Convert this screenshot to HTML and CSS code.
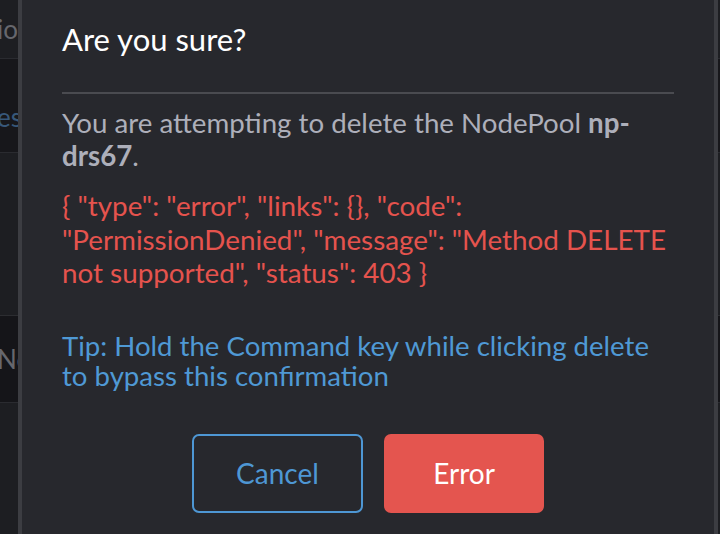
FILE: index.html
```html
<!DOCTYPE html>
<html lang="en">
<head>
<meta charset="utf-8">
<title>Are you sure?</title>
<link rel="stylesheet" href="styles.css">
</head>
<body>
  <div class="page">
    <div class="row row-a"><span class="cell cell-gray">io</span></div>
    <div class="row row-b"><span class="cell cell-blue">es</span></div>
    <div class="row row-c"></div>
    <div class="row row-d"><span class="cell cell-gray">No</span></div>
    <div class="row row-e"></div>
  </div>

  <div class="modal" role="dialog" aria-labelledby="dlg-title">
    <h2 class="title" id="dlg-title">Are you sure?</h2>
    <div class="rule"></div>
    <p class="msg">You are attempting to delete the NodePool <b>np-drs67</b>.</p>
    <p class="err">{ "type": "error", "links": {}, "code": "PermissionDenied", "message": "Method DELETE not supported", "status": 403 }</p>
    <p class="tip">Tip: Hold the Command key while clicking delete to bypass this confirmation</p>
    <div class="actions">
      <button class="btn btn-cancel" type="button">Cancel</button>
      <button class="btn btn-error" type="button">Error</button>
    </div>
  </div>
</body>
</html>
```

FILE: styles.css
```css
html, body {
  margin: 0;
  padding: 0;
}

body {
  width: 720px;
  height: 534px;
  overflow: hidden;
  position: relative;
  background: #1c1d21;
  font-family: Lato, "Open Sans", "Liberation Sans", sans-serif;
}

.page {
  display: flex;
  flex-direction: column;
  height: 534px;
}

.row {
  display: flex;
  align-items: center;
  border-bottom: 1px solid #2a2b30;
  font-size: 26px;
}

.cell {
  margin-left: -3px;
}

.cell-gray { color: #66676d; }
.cell-blue { color: #38587a; }

.row-a { height: 58px; background: #1d1e22; }
.row-b { height: 93px; background: #17171b; align-items: flex-start; }
.row-b .cell { margin-top: 42px; }
.row-c { height: 162px; background: #1d1e22; border-bottom-color: #2c2d31; }
.row-d { height: 86px; background: #151519; }
.row-e { flex: 1; background: #1d1e22; border-bottom: 0; }

.modal {
  position: absolute;
  left: 18px;
  top: 0;
  width: 700px;
  height: 534px;
  box-sizing: border-box;
  background: #27282d;
  border-left: 4px solid #3c3d42;
  border-right: 4px solid #3c3d42;
  padding: 21px 40px 0;
  display: flex;
  flex-direction: column;
}

.title {
  margin: 0;
  font-size: 31px;
  line-height: 37px;
  font-weight: 400;
  color: #ffffff;
}

.rule {
  height: 2px;
  background: #4a4b50;
  margin-top: 34px;
}

.msg {
  margin: 13px 0 0;
  font-size: 27.7px;
  line-height: 32.5px;
  color: #adafba;
}

.msg b {
  font-weight: 700;
}

.err {
  margin: 17px 0 0;
  font-size: 27.8px;
  line-height: 33.5px;
  color: #e5534d;
}

.tip {
  margin: 41px 0 0;
  font-size: 27.6px;
  line-height: 30.5px;
  color: #4f99d5;
}

.actions {
  margin-top: 42px;
  display: flex;
  justify-content: center;
  gap: 21px;
}

.btn {
  height: 79px;
  box-sizing: border-box;
  border-radius: 7px;
  font-family: Lato, "Open Sans", "Liberation Sans", sans-serif;
  font-size: 28px;
  padding: 0;
  cursor: pointer;
}

.btn-cancel {
  width: 171px;
  background: transparent;
  border: 2px solid #4e97d4;
  color: #4e97d4;
}

.btn-error {
  width: 160px;
  background: #e4554f;
  border: 0;
  color: #ffffff;
}
```
